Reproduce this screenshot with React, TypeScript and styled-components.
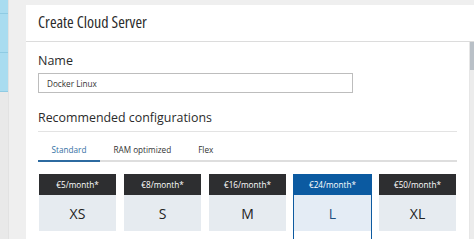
import * as React from "react";
import styled, { createGlobalStyle } from "styled-components";

const GlobalStyle = createGlobalStyle`
  html, body {
    margin: 0;
    padding: 0;
    height: 239px;
    overflow: hidden;
    background: #efefef;
    font-family: "Open Sans", "Liberation Sans", sans-serif;
    color: #333;
  }
`;

interface Plan {
  price: string;
  size: string;
}

const plans: Plan[] = [
  { price: "€5/month*", size: "XS" },
  { price: "€8/month*", size: "S" },
  { price: "€16/month*", size: "M" },
  { price: "€24/month*", size: "L" },
  { price: "€50/month*", size: "XL" },
];

const tabs = ["Standard", "RAM optimized", "Flex"];

const Screen = styled.div`
  display: flex;
  height: 239px;
  overflow: hidden;
`;

const SideNav = styled.div`
  width: 8px;
  flex-shrink: 0;
  background: #e9e9e9;
  border-right: 1px solid #e2e2e2;
  display: flex;
  flex-direction: column;
`;

const SideItem = styled.div<{ h: number }>`
  height: ${p => p.h}px;
  background: #a9dcf0;
  border-bottom: 1px solid #8fcbe3;
`;

const Gutter = styled.div`
  width: 17px;
  flex-shrink: 0;
`;

const Dialog = styled.div`
  flex: 1;
  margin-top: 5px;
  background: #fff;
  display: flex;
  flex-direction: column;
  min-width: 0;
  min-height: 0;
  overflow: hidden;
`;

const Header = styled.div`
  height: 37px;
  flex-shrink: 0;
  border-bottom: 1px solid #dcdcdc;
  display: flex;
  align-items: center;
  padding: 0 0 2px 12px;
  box-sizing: border-box;
  font-size: 16px;
  font-stretch: 75%;
  color: #2b2b2b;
`;

const BodyWrap = styled.div`
  flex: 1;
  display: flex;
  min-height: 0;
  overflow: hidden;
`;

const Body = styled.div`
  flex: 1;
  padding: 10px 12px 0 12px;
  border-right: 1px solid #e6e6e6;
`;

const Scrollbar = styled.div`
  width: 4px;
  background: #ececec;
`;

const Thumb = styled.div`
  height: 28px;
  background: #b9c0c7;
`;

const Label = styled.div`
  font-size: 12.5px;
  line-height: 18px;
  color: #2b2b2b;
`;

const Input = styled.div`
  width: 315px;
  height: 20px;
  box-sizing: border-box;
  border: 1px solid #bdbdbd;
  margin-top: 3px;
  padding-left: 8px;
  display: flex;
  align-items: center;
  font-size: 8.2px;
  color: #333;
`;

const SectionTitle = styled.div`
  margin-top: 16px;
  font-size: 12.4px;
  line-height: 18px;
  color: #2b2b2b;
  padding-bottom: 4px;
  border-bottom: 1px solid #e3e3e3;
`;

const TabBar = styled.div`
  display: flex;
  margin-top: 7px;
  border-bottom: 2px solid #dedede;
`;

const Tab = styled.div<{ active?: boolean }>`
  font-size: 8.2px;
  height: 21px;
  display: flex;
  align-items: center;
  padding: 0 13.5px;
  margin-bottom: -2px;
  color: ${p => (p.active ? "#336fa3" : "#333")};
  border-bottom: 2px solid ${p => (p.active ? "#2c6aa0" : "transparent")};
`;

const Cards = styled.div`
  display: grid;
  grid-template-columns: repeat(5, 79px);
  gap: 6px;
  margin-top: 12px;
`;

const Card = styled.div<{ selected?: boolean }>`
  box-sizing: border-box;
  border: 1px solid ${p => (p.selected ? "#0d5aa0" : "transparent")};
  border-top: none;
  border-bottom: none;
  background: #fff;
  height: 65px;
`;

const Price = styled.div<{ selected?: boolean }>`
  height: 21px;
  background: ${p => (p.selected ? "#0b5aa1" : "#2d2e30")};
  color: #fff;
  font-size: 8.2px;
  display: flex;
  align-items: center;
  justify-content: center;
  margin: 0 ${p => (p.selected ? "-1px" : "0")};
`;

const Size = styled.div<{ selected?: boolean }>`
  height: 36px;
  background: ${p => (p.selected ? "#e4ecf5" : "#e6ebf0")};
  color: ${p => (p.selected ? "#1f4f7e" : "#222")};
  font-size: 14px;
  display: flex;
  align-items: center;
  justify-content: center;
`;

const App = () => {
  return (
    <>
      <GlobalStyle />
      <Screen>
        <SideNav>
          <SideItem h={13} />
          <SideItem h={38} />
          <SideItem h={38} />
        </SideNav>
        <Gutter />
        <Dialog>
          <Header>Create Cloud Server</Header>
          <BodyWrap>
            <Body>
              <Label>Name</Label>
              <Input>Docker Linux</Input>
              <SectionTitle>Recommended configurations</SectionTitle>
              <TabBar>
                {tabs.map((t, i) => (
                  <Tab key={t} active={i === 0}>{t}</Tab>
                ))}
              </TabBar>
              <Cards>
                {plans.map(p => (
                  <Card key={p.size} selected={p.size === "L"}>
                    <Price selected={p.size === "L"}>{p.price}</Price>
                    <Size selected={p.size === "L"}>{p.size}</Size>
                  </Card>
                ))}
              </Cards>
            </Body>
            <Scrollbar>
              <Thumb />
            </Scrollbar>
          </BodyWrap>
        </Dialog>
      </Screen>
    </>
  );
};

export default App;
